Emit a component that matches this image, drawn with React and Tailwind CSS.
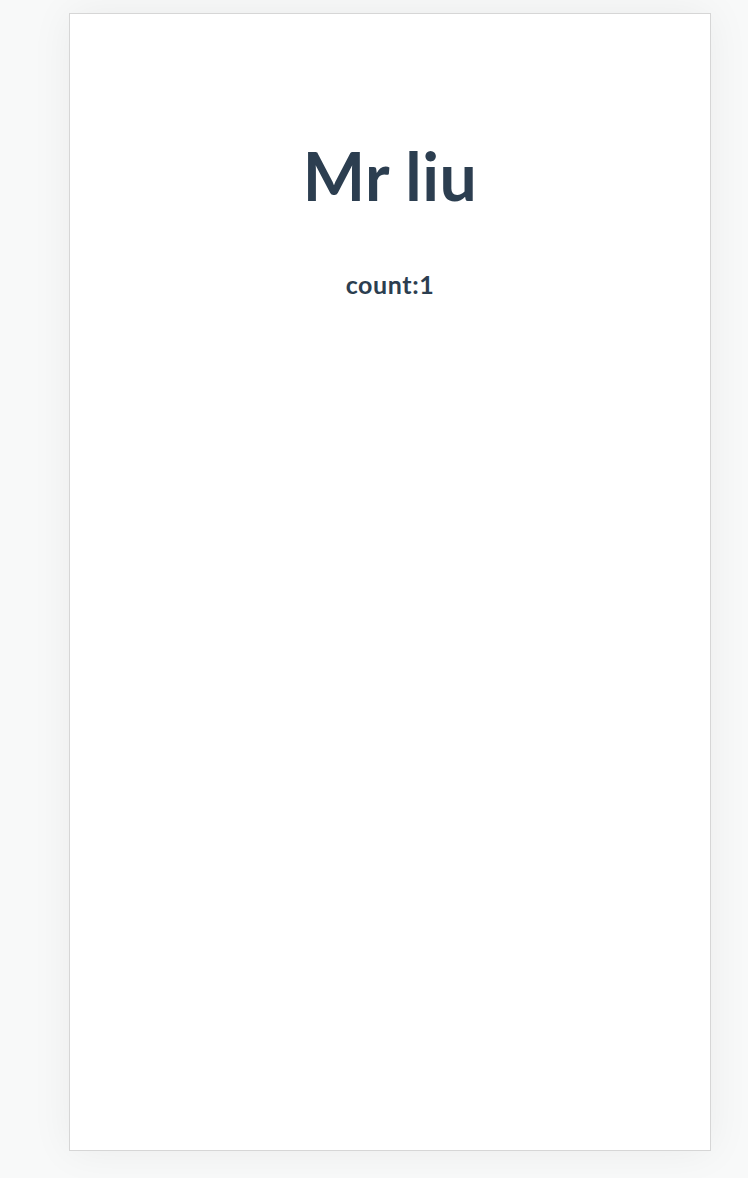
import React, { useState } from 'react';

const App = () => {
  const [count] = useState(1);

  return (
    <div className="min-h-[1178px] bg-[#f8f9f9] pt-[13px] pl-[69px] pr-[37px] pb-[27px]">
      <div
        className="h-[1138px] bg-white border border-[#d6d6d6] shadow-[0_0_40px_rgba(0,0,0,0.06)] text-center text-[#2c3e50]"
        style={{ fontFamily: 'Lato, "Noto Sans", Helvetica, Arial, sans-serif' }}
      >
        <h1 className="pt-[129px] text-[66px] font-bold leading-none tracking-[0.5px]">Mr liu</h1>
        <p className="mt-[63px] text-[25px] font-bold leading-none tracking-[0.6px]">count:{count}</p>
      </div>
    </div>
  );
};

export default App;
